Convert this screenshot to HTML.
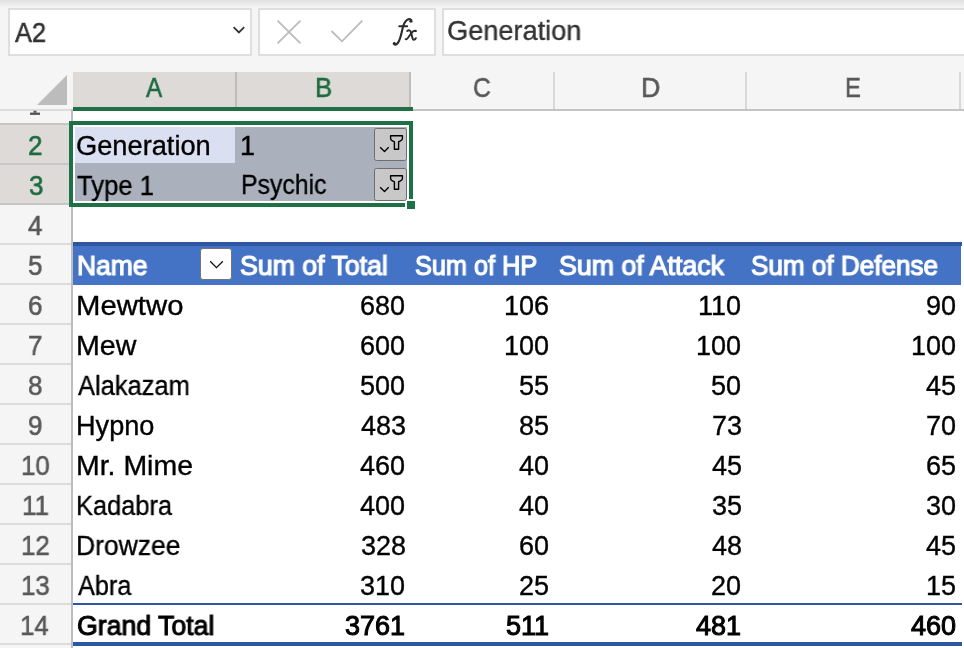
<!DOCTYPE html>
<html><head><meta charset="utf-8">
<style>
html,body{margin:0;padding:0}
body{width:964px;height:648px;overflow:hidden;position:relative;background:#fff;font-family:"Liberation Sans",sans-serif}
.r{position:absolute}
.t{position:absolute;white-space:pre;line-height:normal;transform-origin:0 0;will-change:transform}
svg{position:absolute;left:0;top:0}
</style></head><body>
<!-- toolbar -->
<div class="r" style="left:0;top:0;width:964px;height:111px;background:#f5f5f5"></div>
<div class="r" style="left:0;top:0;width:964px;height:8px;background:linear-gradient(#e0e0e0,#f5f5f5)"></div>
<div class="r" style="left:8px;top:8px;width:240px;height:44px;border:2px solid #dedede;background:#fff"></div>
<div class="r" style="left:258px;top:8px;width:174px;height:44px;border:2px solid #dedede;background:#fff"></div>
<div class="r" style="left:442px;top:8px;width:530px;height:44px;border:2px solid #dedede;background:#fff"></div>
<!-- column header -->
<div class="r" style="left:0;top:109px;width:964px;height:2px;background:#c4c4c4"></div>
<div class="r" style="left:0;top:109px;width:71px;height:2px;background:#dcdcdc"></div>
<div class="r" style="left:73px;top:72px;width:336px;height:35px;background:#dddad8"></div>
<div class="r" style="left:235px;top:72px;width:2px;height:35px;background:#bdbdbd"></div>
<div class="r" style="left:409px;top:72px;width:2px;height:35px;background:#bdbdbd"></div>
<div class="r" style="left:553px;top:72px;width:2px;height:37px;background:#d9d9d9"></div>
<div class="r" style="left:745px;top:72px;width:2px;height:37px;background:#d9d9d9"></div>
<div class="r" style="left:959px;top:72px;width:2px;height:37px;background:#d9d9d9"></div>
<div class="r" style="left:73px;top:107px;width:340px;height:4px;background:#1e7145"></div>
<!-- row header -->
<div class="r" style="left:0;top:111px;width:71px;height:537px;background:#f5f5f5"></div>
<div class="r" style="left:0;top:125px;width:71px;height:78px;background:#dddad8"></div>
<div class="r" style="left:71px;top:111px;width:2px;height:537px;background:#bdbdbd"></div>
<div class="r" style="left:0;top:123px;width:71px;height:2px;background:#c6c6c6"></div>
<div class="r" style="left:0;top:163px;width:71px;height:2px;background:#c6c6c6"></div>
<div class="r" style="left:0;top:203px;width:71px;height:2px;background:#c6c6c6"></div>
<div class="r" style="left:0;top:243px;width:71px;height:2px;background:#dcdcdc"></div>
<div class="r" style="left:0;top:283px;width:71px;height:2px;background:#dcdcdc"></div>
<div class="r" style="left:0;top:323px;width:71px;height:2px;background:#dcdcdc"></div>
<div class="r" style="left:0;top:363px;width:71px;height:2px;background:#dcdcdc"></div>
<div class="r" style="left:0;top:403px;width:71px;height:2px;background:#dcdcdc"></div>
<div class="r" style="left:0;top:443px;width:71px;height:2px;background:#dcdcdc"></div>
<div class="r" style="left:0;top:483px;width:71px;height:2px;background:#dcdcdc"></div>
<div class="r" style="left:0;top:523px;width:71px;height:2px;background:#dcdcdc"></div>
<div class="r" style="left:0;top:563px;width:71px;height:2px;background:#dcdcdc"></div>
<div class="r" style="left:0;top:603px;width:71px;height:2px;background:#dcdcdc"></div>
<div class="r" style="left:0;top:643px;width:71px;height:2px;background:#dcdcdc"></div>
<!-- pivot filter -->
<div class="r" style="left:69px;top:121px;width:336px;height:78px;border:4px solid #1e7145"></div>
<div class="r" style="left:73px;top:125px;width:336px;height:78px;background:#fff"></div>
<div class="r" style="left:75px;top:127px;width:332px;height:74px;background:#aab0bc"></div>
<div class="r" style="left:75px;top:127px;width:160px;height:36px;background:#dae0f2"></div>
<div class="r" style="left:404.8px;top:198.8px;width:13px;height:13px;background:#fff"></div>
<div class="r" style="left:407.2px;top:201.2px;width:7.8px;height:7.8px;background:#1e7145"></div>
<div class="r" style="left:374px;top:128px;width:30.5px;height:30.5px;border:1.2px solid #6e6e6e;border-radius:2.5px;background:#c8c8c8"></div>
<div class="r" style="left:374px;top:168px;width:30.5px;height:30.5px;border:1.2px solid #6e6e6e;border-radius:2.5px;background:#c8c8c8"></div>
<!-- table header -->
<div class="r" style="left:73px;top:242px;width:889px;height:4px;background:#2f56a0"></div>
<div class="r" style="left:73px;top:246px;width:888px;height:39px;background:#4472c4"></div>
<div class="r" style="left:200.3px;top:248.3px;width:29.8px;height:29.8px;border:1.2px solid #747474;border-radius:3px;background:#fff"></div>
<!-- grand total -->
<div class="r" style="left:73px;top:603px;width:889px;height:2px;background:#2f56a0"></div>
<div class="r" style="left:73px;top:642px;width:889px;height:4px;background:#2f56a0"></div>
<svg width="964" height="648" viewBox="0 0 964 648">
  <!-- select all triangle -->
  <polygon points="37,105 67,105 67,75" fill="#bcbcbc"/>
  <!-- name box chevron -->
  <polyline points="233.6,27.2 238.9,32.4 244.2,27.2" fill="none" stroke="#333" stroke-width="1.8"/>
  <!-- X and check -->
  <line x1="277.5" y1="20.7" x2="300.5" y2="43.3" stroke="#bbb" stroke-width="1.8"/>
  <line x1="300.5" y1="20.7" x2="277.5" y2="43.3" stroke="#bbb" stroke-width="1.8"/>
  <polyline points="331.5,31 342,41.3 362.3,20.7" fill="none" stroke="#bbb" stroke-width="1.8"/>
  <!-- row 1 partial number -->
  <rect x="30" y="112.6" width="10" height="2.3" fill="#555"/>
  <rect x="33.5" y="110.8" width="3" height="2" fill="#555"/>
  <!-- filter icons -->
  <g fill="none" stroke="#000" stroke-width="1.4" stroke-linejoin="round">
    <path d="M390.6,135.8 L402.4,135.8 L402.4,138.6 Q402.4,139.9 401,140.6 L398.6,141.9 L398.6,149.3 L394.4,149.3 L394.4,141.9 L392,140.6 Q390.6,139.9 390.6,138.6 Z"/>
    <polyline points="380.2,147.3 384.5,151.4 388.7,147.3"/>
    <path transform="translate(0,40)" d="M390.6,135.8 L402.4,135.8 L402.4,138.6 Q402.4,139.9 401,140.6 L398.6,141.9 L398.6,149.3 L394.4,149.3 L394.4,141.9 L392,140.6 Q390.6,139.9 390.6,138.6 Z"/>
    <polyline transform="translate(0,40)" points="380.2,147.3 384.5,151.4 388.7,147.3"/>
  </g>
  <!-- name dropdown chevron -->
  <polyline points="210.2,261.3 216.5,267.6 222.8,261.3" fill="none" stroke="#111" stroke-width="1.3"/>
</svg>
<div class="t" style='left:14.52px;top:16.1px;font:normal normal 28.5px "Liberation Sans", sans-serif;color:#333333;transform:scaleX(0.8912);-webkit-text-stroke:0.6px #333333;'>A2</div>
<div class="t" style='left:447.37px;top:15.2px;font:normal normal 27.5px "Liberation Sans", sans-serif;color:#333333;transform:scaleX(0.9876);-webkit-text-stroke:0.35px #333333;'>Generation</div>
<div class="t" style='left:146.21px;top:71.3px;font:normal normal 28.5px "Liberation Sans", sans-serif;color:#1d6b3f;transform:scaleX(0.8513);-webkit-text-stroke:0.6px #1d6b3f;'>A</div>
<div class="t" style='left:315px;top:71.3px;font:normal normal 28.5px "Liberation Sans", sans-serif;color:#1d6b3f;transform:scaleX(0.9016);-webkit-text-stroke:0.6px #1d6b3f;'>B</div>
<div class="t" style='left:473.32px;top:71.3px;font:normal normal 28.5px "Liberation Sans", sans-serif;color:#595959;transform:scaleX(0.8649);-webkit-text-stroke:0.6px #595959;'>C</div>
<div class="t" style='left:640.73px;top:71.3px;font:normal normal 28.5px "Liberation Sans", sans-serif;color:#595959;transform:scaleX(0.9371);-webkit-text-stroke:0.6px #595959;'>D</div>
<div class="t" style='left:845.33px;top:71.3px;font:normal normal 28.5px "Liberation Sans", sans-serif;color:#595959;transform:scaleX(0.8375);-webkit-text-stroke:0.6px #595959;'>E</div>
<div class="t" style='left:28.32px;top:129.1px;font:normal normal 28.5px "Liberation Sans", sans-serif;color:#1d6b3f;transform:scaleX(0.9100);-webkit-text-stroke:0.6px #1d6b3f;'>2</div>
<div class="t" style='left:28.55px;top:169.1px;font:normal normal 28.5px "Liberation Sans", sans-serif;color:#1d6b3f;transform:scaleX(0.9100);-webkit-text-stroke:0.6px #1d6b3f;'>3</div>
<div class="t" style='left:28.43px;top:209.1px;font:normal normal 28.5px "Liberation Sans", sans-serif;color:#595959;transform:scaleX(0.9100);-webkit-text-stroke:0.6px #595959;'>4</div>
<div class="t" style='left:28.32px;top:249.1px;font:normal normal 28.5px "Liberation Sans", sans-serif;color:#595959;transform:scaleX(0.9100);-webkit-text-stroke:0.6px #595959;'>5</div>
<div class="t" style='left:28.32px;top:289.1px;font:normal normal 28.5px "Liberation Sans", sans-serif;color:#595959;transform:scaleX(0.9100);-webkit-text-stroke:0.6px #595959;'>6</div>
<div class="t" style='left:28.32px;top:329.1px;font:normal normal 28.5px "Liberation Sans", sans-serif;color:#595959;transform:scaleX(0.9100);-webkit-text-stroke:0.6px #595959;'>7</div>
<div class="t" style='left:28.43px;top:369.1px;font:normal normal 28.5px "Liberation Sans", sans-serif;color:#595959;transform:scaleX(0.9100);-webkit-text-stroke:0.6px #595959;'>8</div>
<div class="t" style='left:28.43px;top:409.1px;font:normal normal 28.5px "Liberation Sans", sans-serif;color:#595959;transform:scaleX(0.9100);-webkit-text-stroke:0.6px #595959;'>9</div>
<div class="t" style='left:20.7px;top:449.1px;font:normal normal 28.5px "Liberation Sans", sans-serif;color:#595959;transform:scaleX(0.9100);-webkit-text-stroke:0.6px #595959;'>10</div>
<div class="t" style='left:21.72px;top:489.1px;font:normal normal 28.5px "Liberation Sans", sans-serif;color:#595959;transform:scaleX(0.9100);-webkit-text-stroke:0.6px #595959;'>11</div>
<div class="t" style='left:20.81px;top:529.1px;font:normal normal 28.5px "Liberation Sans", sans-serif;color:#595959;transform:scaleX(0.9100);-webkit-text-stroke:0.6px #595959;'>12</div>
<div class="t" style='left:20.7px;top:569.1px;font:normal normal 28.5px "Liberation Sans", sans-serif;color:#595959;transform:scaleX(0.9100);-webkit-text-stroke:0.6px #595959;'>13</div>
<div class="t" style='left:20.47px;top:609.1px;font:normal normal 28.5px "Liberation Sans", sans-serif;color:#595959;transform:scaleX(0.9100);-webkit-text-stroke:0.6px #595959;'>14</div>
<div class="t" style='left:76.24px;top:130.9px;font:normal normal 27px "Liberation Sans", sans-serif;color:#000000;transform:scaleX(1.0088);-webkit-text-stroke:0.35px #000000;'>Generation</div>
<div class="t" style='left:240.4px;top:130.9px;font:normal normal 27px "Liberation Sans", sans-serif;color:#000000;-webkit-text-stroke:0.35px #000000;'>1</div>
<div class="t" style='left:77.03px;top:170.6px;font:normal normal 27px "Liberation Sans", sans-serif;color:#000000;transform:scaleX(0.9497);-webkit-text-stroke:0.35px #000000;'>Type 1</div>
<div class="t" style='left:240.56px;top:170.4px;font:normal normal 27px "Liberation Sans", sans-serif;color:#000000;transform:scaleX(0.9193);-webkit-text-stroke:0.35px #000000;'>Psychic</div>
<div class="t" style='left:76.93px;top:251.1px;font:normal normal 27px "Liberation Sans", sans-serif;color:#ffffff;transform:scaleX(0.9786);-webkit-text-stroke:1.2px #ffffff;'>Name</div>
<div class="t" style='left:240.41px;top:251.1px;font:normal normal 27px "Liberation Sans", sans-serif;color:#ffffff;transform:scaleX(0.9888);-webkit-text-stroke:1.2px #ffffff;'>Sum of Total</div>
<div class="t" style='left:414.93px;top:251.1px;font:normal normal 27px "Liberation Sans", sans-serif;color:#ffffff;transform:scaleX(0.9362);-webkit-text-stroke:1.2px #ffffff;'>Sum of HP</div>
<div class="t" style='left:558.8px;top:251.1px;font:normal normal 27px "Liberation Sans", sans-serif;color:#ffffff;transform:scaleX(0.9910);-webkit-text-stroke:1.2px #ffffff;'>Sum of Attack</div>
<div class="t" style='left:750.72px;top:251.1px;font:normal normal 27px "Liberation Sans", sans-serif;color:#ffffff;transform:scaleX(0.9662);-webkit-text-stroke:1.2px #ffffff;'>Sum of Defense</div>
<div class="t" style='left:75.93px;top:291.1px;font:normal normal 27px "Liberation Sans", sans-serif;color:#000000;transform:scaleX(1.0854);-webkit-text-stroke:0.35px #000000;'>Mewtwo</div>
<div class="t" style='left:360.25px;top:291.1px;font:normal normal 27px "Liberation Sans", sans-serif;color:#000000;-webkit-text-stroke:0.35px #000000;'>680</div>
<div class="t" style='left:504.2px;top:291.1px;font:normal normal 27px "Liberation Sans", sans-serif;color:#000000;-webkit-text-stroke:0.35px #000000;'>106</div>
<div class="t" style='left:698.25px;top:291.1px;font:normal normal 27px "Liberation Sans", sans-serif;color:#000000;-webkit-text-stroke:0.35px #000000;'>110</div>
<div class="t" style='left:925.75px;top:291.1px;font:normal normal 27px "Liberation Sans", sans-serif;color:#000000;-webkit-text-stroke:0.35px #000000;'>90</div>
<div class="t" style='left:75.98px;top:331.1px;font:normal normal 27px "Liberation Sans", sans-serif;color:#000000;transform:scaleX(1.0606);-webkit-text-stroke:0.35px #000000;'>Mew</div>
<div class="t" style='left:360.25px;top:331.1px;font:normal normal 27px "Liberation Sans", sans-serif;color:#000000;-webkit-text-stroke:0.35px #000000;'>600</div>
<div class="t" style='left:503.95px;top:331.1px;font:normal normal 27px "Liberation Sans", sans-serif;color:#000000;-webkit-text-stroke:0.35px #000000;'>100</div>
<div class="t" style='left:696.25px;top:331.1px;font:normal normal 27px "Liberation Sans", sans-serif;color:#000000;-webkit-text-stroke:0.35px #000000;'>100</div>
<div class="t" style='left:910.75px;top:331.1px;font:normal normal 27px "Liberation Sans", sans-serif;color:#000000;-webkit-text-stroke:0.35px #000000;'>100</div>
<div class="t" style='left:78.1px;top:371.1px;font:normal normal 27px "Liberation Sans", sans-serif;color:#000000;transform:scaleX(0.9436);-webkit-text-stroke:0.35px #000000;'>Alakazam</div>
<div class="t" style='left:360.25px;top:371.1px;font:normal normal 27px "Liberation Sans", sans-serif;color:#000000;-webkit-text-stroke:0.35px #000000;'>500</div>
<div class="t" style='left:519.2px;top:371.1px;font:normal normal 27px "Liberation Sans", sans-serif;color:#000000;-webkit-text-stroke:0.35px #000000;'>55</div>
<div class="t" style='left:711.25px;top:371.1px;font:normal normal 27px "Liberation Sans", sans-serif;color:#000000;-webkit-text-stroke:0.35px #000000;'>50</div>
<div class="t" style='left:926px;top:371.1px;font:normal normal 27px "Liberation Sans", sans-serif;color:#000000;-webkit-text-stroke:0.35px #000000;'>45</div>
<div class="t" style='left:76.09px;top:411.1px;font:normal normal 27px "Liberation Sans", sans-serif;color:#000000;transform:scaleX(1.0053);-webkit-text-stroke:0.35px #000000;'>Hypno</div>
<div class="t" style='left:360.5px;top:411.1px;font:normal normal 27px "Liberation Sans", sans-serif;color:#000000;-webkit-text-stroke:0.35px #000000;'>483</div>
<div class="t" style='left:519.2px;top:411.1px;font:normal normal 27px "Liberation Sans", sans-serif;color:#000000;-webkit-text-stroke:0.35px #000000;'>85</div>
<div class="t" style='left:711.5px;top:411.1px;font:normal normal 27px "Liberation Sans", sans-serif;color:#000000;-webkit-text-stroke:0.35px #000000;'>73</div>
<div class="t" style='left:925.75px;top:411.1px;font:normal normal 27px "Liberation Sans", sans-serif;color:#000000;-webkit-text-stroke:0.35px #000000;'>70</div>
<div class="t" style='left:75.99px;top:451.1px;font:normal normal 27px "Liberation Sans", sans-serif;color:#000000;transform:scaleX(1.0537);-webkit-text-stroke:0.35px #000000;'>Mr. Mime</div>
<div class="t" style='left:360.25px;top:451.1px;font:normal normal 27px "Liberation Sans", sans-serif;color:#000000;-webkit-text-stroke:0.35px #000000;'>460</div>
<div class="t" style='left:518.95px;top:451.1px;font:normal normal 27px "Liberation Sans", sans-serif;color:#000000;-webkit-text-stroke:0.35px #000000;'>40</div>
<div class="t" style='left:711.5px;top:451.1px;font:normal normal 27px "Liberation Sans", sans-serif;color:#000000;-webkit-text-stroke:0.35px #000000;'>45</div>
<div class="t" style='left:926px;top:451.1px;font:normal normal 27px "Liberation Sans", sans-serif;color:#000000;-webkit-text-stroke:0.35px #000000;'>65</div>
<div class="t" style='left:76.22px;top:491.1px;font:normal normal 27px "Liberation Sans", sans-serif;color:#000000;transform:scaleX(0.9416);-webkit-text-stroke:0.35px #000000;'>Kadabra</div>
<div class="t" style='left:360.25px;top:491.1px;font:normal normal 27px "Liberation Sans", sans-serif;color:#000000;-webkit-text-stroke:0.35px #000000;'>400</div>
<div class="t" style='left:518.95px;top:491.1px;font:normal normal 27px "Liberation Sans", sans-serif;color:#000000;-webkit-text-stroke:0.35px #000000;'>40</div>
<div class="t" style='left:711.5px;top:491.1px;font:normal normal 27px "Liberation Sans", sans-serif;color:#000000;-webkit-text-stroke:0.35px #000000;'>35</div>
<div class="t" style='left:925.75px;top:491.1px;font:normal normal 27px "Liberation Sans", sans-serif;color:#000000;-webkit-text-stroke:0.35px #000000;'>30</div>
<div class="t" style='left:76.14px;top:531.1px;font:normal normal 27px "Liberation Sans", sans-serif;color:#000000;transform:scaleX(0.9807);-webkit-text-stroke:0.35px #000000;'>Drowzee</div>
<div class="t" style='left:360.5px;top:531.1px;font:normal normal 27px "Liberation Sans", sans-serif;color:#000000;-webkit-text-stroke:0.35px #000000;'>328</div>
<div class="t" style='left:518.95px;top:531.1px;font:normal normal 27px "Liberation Sans", sans-serif;color:#000000;-webkit-text-stroke:0.35px #000000;'>60</div>
<div class="t" style='left:711.5px;top:531.1px;font:normal normal 27px "Liberation Sans", sans-serif;color:#000000;-webkit-text-stroke:0.35px #000000;'>48</div>
<div class="t" style='left:926px;top:531.1px;font:normal normal 27px "Liberation Sans", sans-serif;color:#000000;-webkit-text-stroke:0.35px #000000;'>45</div>
<div class="t" style='left:78.1px;top:571.1px;font:normal normal 27px "Liberation Sans", sans-serif;color:#000000;transform:scaleX(0.9362);-webkit-text-stroke:0.35px #000000;'>Abra</div>
<div class="t" style='left:360.25px;top:571.1px;font:normal normal 27px "Liberation Sans", sans-serif;color:#000000;-webkit-text-stroke:0.35px #000000;'>310</div>
<div class="t" style='left:519.2px;top:571.1px;font:normal normal 27px "Liberation Sans", sans-serif;color:#000000;-webkit-text-stroke:0.35px #000000;'>25</div>
<div class="t" style='left:711.25px;top:571.1px;font:normal normal 27px "Liberation Sans", sans-serif;color:#000000;-webkit-text-stroke:0.35px #000000;'>20</div>
<div class="t" style='left:926px;top:571.1px;font:normal normal 27px "Liberation Sans", sans-serif;color:#000000;-webkit-text-stroke:0.35px #000000;'>15</div>
<div class="t" style='left:77.36px;top:611.2px;font:normal normal 27px "Liberation Sans", sans-serif;color:#000000;transform:scaleX(0.9883);-webkit-text-stroke:1.0px #000000;'>Grand Total</div>
<div class="t" style='left:345.25px;top:611.2px;font:normal normal 27px "Liberation Sans", sans-serif;color:#000000;-webkit-text-stroke:1.0px #000000;'>3761</div>
<div class="t" style='left:505.95px;top:611.2px;font:normal normal 27px "Liberation Sans", sans-serif;color:#000000;-webkit-text-stroke:1.0px #000000;'>511</div>
<div class="t" style='left:696.25px;top:611.2px;font:normal normal 27px "Liberation Sans", sans-serif;color:#000000;-webkit-text-stroke:1.0px #000000;'>481</div>
<div class="t" style='left:910.5px;top:611.2px;font:normal normal 27px "Liberation Sans", sans-serif;color:#000000;-webkit-text-stroke:1.0px #000000;'>460</div>
<svg width="964" height="648" viewBox="0 0 964 648"><g fill="none" stroke="#2b2b2b" stroke-linecap="round">
<path d="M411.6,21.4 C411.6,19.3 409.3,18.6 407.5,19.6 C404.6,21.2 403.2,25.2 402.2,30 C401.2,35 399.7,40.8 397.6,43.3 C396.2,45 394.3,45.1 393.7,43.6" stroke-width="2.1"/>
<circle cx="410.6" cy="21.3" r="1.3" fill="#2b2b2b" stroke="none"/>
<circle cx="394.4" cy="43.2" r="1.3" fill="#2b2b2b" stroke="none"/>
<path d="M399.2,26.3 L407.2,26.3" stroke-width="1.9"/>
<path d="M407.2,31 C408.6,30 410.2,30.1 410.8,31.8 L412.6,38.4 C413.1,40.2 414.6,40.1 415.8,38.2" stroke-width="2"/>
<path d="M415.9,31 C414.2,30.2 412.6,31.4 411.2,33.4 L407.6,38.2 C406.9,39.1 406.1,39.6 405.6,39.1" stroke-width="1.8"/>
<circle cx="415.4" cy="30.9" r="1.1" fill="#2b2b2b" stroke="none"/>
</g></svg>
</body></html>
